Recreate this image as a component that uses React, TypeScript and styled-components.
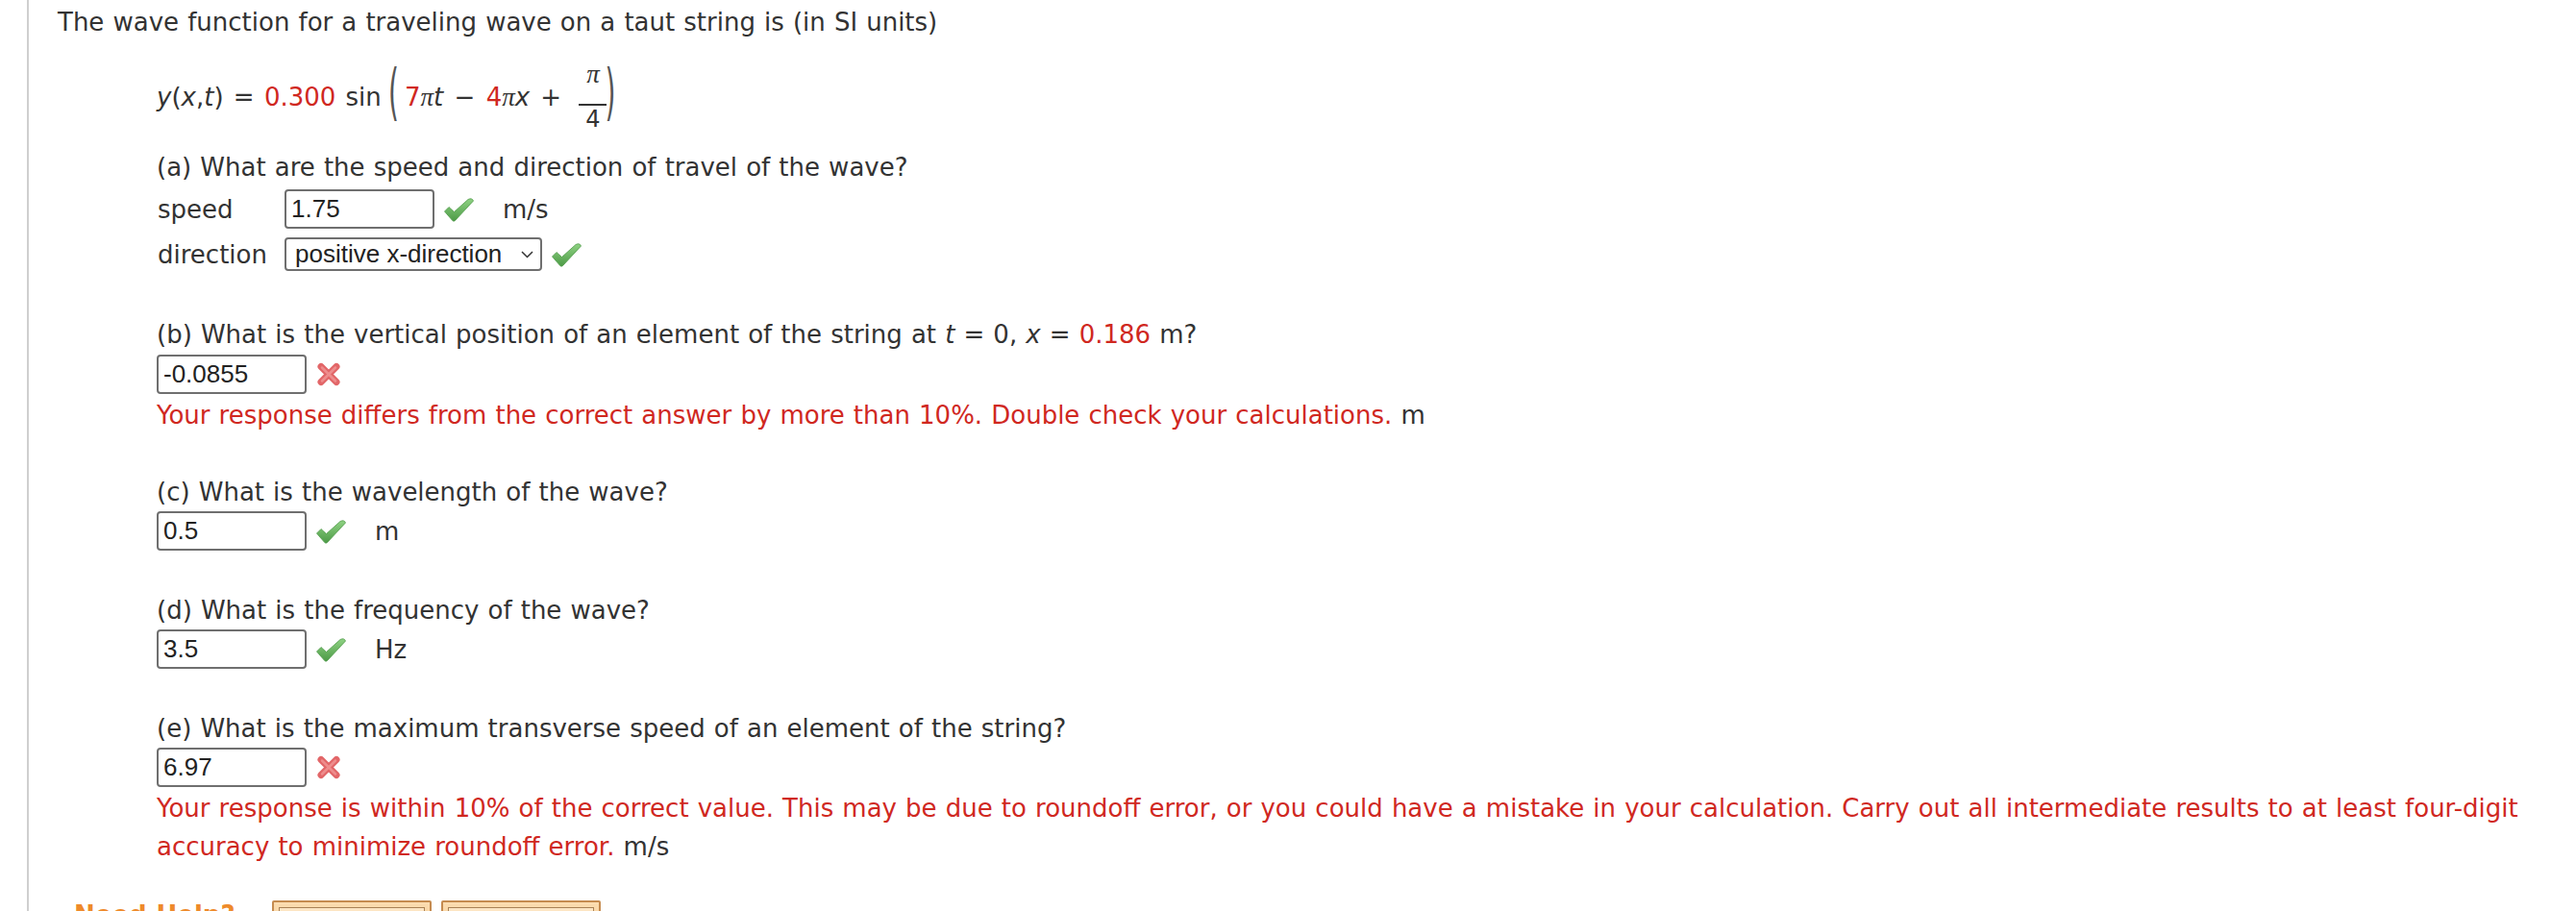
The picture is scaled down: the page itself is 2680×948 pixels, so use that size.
import React from "react";
import styled, { createGlobalStyle } from "styled-components";

const GlobalStyle = createGlobalStyle`
  html, body { margin: 0; padding: 0; background: #ffffff; }
  body {
    font-family: Verdana, "DejaVu Sans", sans-serif;
    color: #333333;
    overflow: hidden;
  }
`;

const Page = styled.div`
  margin-left: 28px;
  border-left: 2px solid #cfcfcf;
  padding: 3px 0 0 30px;
  min-height: 100vh;
  box-sizing: border-box;
  font-size: 26px;
  line-height: 40px;
  word-spacing: 0.85px;
`;

const Line = styled.div`
  line-height: 40px;
  white-space: nowrap;
`;

const Equation = styled.div`
  display: flex;
  align-items: center;
  margin: 22px 0 0 103px;
  word-spacing: 0;
`;

const MathText = styled.span<{ $ws: number }>`
  line-height: 30px;
  white-space: pre;
  word-spacing: ${(p) => p.$ws}px;
`;

const Var = styled.i`
  font-style: italic;
`;

const Pi = styled.i`
  font-family: "Liberation Serif", "DejaVu Serif", serif;
  font-style: italic;
  font-size: 27px;
`;

const Red = styled.span`
  color: #d0281f;
`;

const Paren = styled.span<{ $side: "l" | "r" }>`
  display: inline-block;
  font-size: 28px;
  line-height: 28px;
  color: #555555;
  transform: scaleY(2.3);
  margin-bottom: 8px;
  margin-left: ${(p) => (p.$side === "l" ? "-3px" : "-2px")};
  margin-right: ${(p) => (p.$side === "l" ? "6px" : "0")};
`;

const Frac = styled.span`
  display: inline-flex;
  flex-direction: column;
  align-items: center;
  font-size: 24px;
  line-height: 24px;
  margin-left: 7px;
`;

const Num = styled.span`
  padding-bottom: 18px;
`;

const Bar = styled.span`
  width: 29px;
  height: 2px;
  background: #333333;
`;

const Den = styled.span`
  padding-top: 2px;
`;

const Part = styled.div`
  margin-left: 103px;
`;

const Question = styled.div<{ $mt: number }>`
  margin-top: ${(p) => p.$mt}px;
  line-height: 40px;
  white-space: nowrap;
`;

const AnswerRow = styled.div<{ $mt: number }>`
  display: flex;
  align-items: center;
  height: 41px;
  margin-top: ${(p) => p.$mt}px;
`;

const Label = styled.span`
  width: 133px;
  flex: none;
  padding-left: 1px;
  box-sizing: border-box;
`;

const TextInput = styled.input`
  box-sizing: border-box;
  width: 156px;
  height: 41px;
  margin: 0;
  border: 2px solid #6f6f6f;
  border-radius: 4px;
  padding: 0 5px;
  font-family: Arial, "Liberation Sans", sans-serif;
  font-size: 26px;
  color: #222222;
  background: #ffffff;
  outline: none;
`;

const SelectBox = styled.div`
  box-sizing: border-box;
  width: 268px;
  height: 35px;
  border: 2px solid #6f6f6f;
  border-radius: 4px;
  padding: 0 7px 0 9px;
  display: flex;
  align-items: center;
  justify-content: space-between;
  font-family: Arial, "Liberation Sans", sans-serif;
  font-size: 26px;
  line-height: 31px;
  word-spacing: 0;
  color: #222222;
`;

const Mark = styled.span`
  margin-left: 10px;
  display: flex;
  align-items: center;
`;

const Unit = styled.span`
  margin-left: 30px;
`;

const Feedback = styled.div<{ $mt: number }>`
  margin-top: ${(p) => p.$mt}px;
  color: #d0281f;
  line-height: 40px;
  white-space: nowrap;
`;

const Tail = styled.span`
  color: #333333;
`;

const HelpRow = styled.div`
  display: flex;
  align-items: flex-start;
  margin: 36px 0 0 17px;
`;

const HelpLabel = styled.span`
  width: 206px;
  flex: none;
  font-weight: bold;
  color: #ee8a2a;
  line-height: 30px;
`;

const HelpButton = styled.button`
  box-sizing: border-box;
  width: 166px;
  height: 52px;
  margin: 0 10px 0 0;
  padding: 5px;
  border: 2px solid #c58b50;
  border-radius: 2px;
  background: linear-gradient(#fbdcb0, #f6c486);
  display: flex;
`;

const ButtonInner = styled.span`
  flex: 1;
  border: 1px solid #a98156;
  background: linear-gradient(#fde7c6, #f8cd96);
  font-family: Verdana, "DejaVu Sans", sans-serif;
  font-size: 22px;
  color: #333333;
  line-height: 36px;
`;

const CheckIcon = () => (
  <svg width="31" height="26" viewBox="0 0 31 26">
    <defs>
      <linearGradient id="chk" x1="0" y1="0" x2="0" y2="1">
        <stop offset="0" stopColor="#8fd283" />
        <stop offset="1" stopColor="#4c9a46" />
      </linearGradient>
    </defs>
    <path
      d="M0.5 15 L5 10.5 L10.5 15.5 L25 2.5 Q29 0.5 30.5 4 L11.5 24.5 Q10 25.8 8.8 24.6 Z"
      fill="url(#chk)"
      stroke="#4f9a49"
      strokeWidth="0.8"
      strokeLinejoin="round"
    />
  </svg>
);

const CrossIcon = () => (
  <svg width="26" height="25" viewBox="0 0 26 25">
    <g stroke="#e26668" strokeWidth="7" strokeLinecap="round">
      <line x1="5" y1="4.5" x2="21" y2="20.5" />
      <line x1="21" y1="4.5" x2="5" y2="20.5" />
    </g>
    <g stroke="#ee8d8d" strokeWidth="2.5" strokeLinecap="round">
      <line x1="6" y1="5.5" x2="20" y2="19.5" />
      <line x1="20" y1="5.5" x2="6" y2="19.5" />
    </g>
  </svg>
);

const Chevron = () => (
  <svg width="13" height="8" viewBox="0 0 13 8">
    <polyline points="1,1 6.5,6.5 12,1" fill="none" stroke="#333" strokeWidth="1.5" />
  </svg>
);

export default function App() {
  return (
    <>
      <GlobalStyle />
      <Page>
        <Line>The wave function for a traveling wave on a taut string is (in SI units)</Line>

        <Equation>
          <MathText $ws={2}>
            <Var>y</Var>(<Var>x</Var>,<Var>t</Var>) = <Red>0.300</Red> sin{" "}
          </MathText>
          <Paren $side="l">(</Paren>
          <MathText $ws={3}>
            <Red>7</Red>
            <Pi>π</Pi>
            <Var>t</Var> − <Red>4</Red>
            <Pi>π</Pi>
            <Var>x</Var> +{" "}
          </MathText>
          <Frac>
            <Num>
              <Pi>π</Pi>
            </Num>
            <Bar />
            <Den>4</Den>
          </Frac>
          <Paren $side="r">)</Paren>
        </Equation>

        <Part>
          <Question $mt={18}>(a) What are the speed and direction of travel of the wave?</Question>
          <AnswerRow $mt={3}>
            <Label>speed</Label>
            <TextInput readOnly value="1.75" />
            <Mark>
              <CheckIcon />
            </Mark>
            <Unit>m/s</Unit>
          </AnswerRow>
          <AnswerRow $mt={6}>
            <Label>direction</Label>
            <SelectBox>
              <span>positive x-direction</span>
              <Chevron />
            </SelectBox>
            <Mark>
              <CheckIcon />
            </Mark>
          </AnswerRow>
        </Part>

        <Part>
          <Question $mt={43}>
            (b) What is the vertical position of an element of the string at <Var>t</Var> = 0,{" "}
            <Var>x</Var> = <Red>0.186</Red> m?
          </Question>
          <AnswerRow $mt={1}>
            <TextInput readOnly value="-0.0855" />
            <Mark>
              <CrossIcon />
            </Mark>
          </AnswerRow>
          <Feedback $mt={2}>
            Your response differs from the correct answer by more than 10%. Double check your calculations.{" "}
            <Tail>m</Tail>
          </Feedback>
        </Part>

        <Part>
          <Question $mt={40}>(c) What is the wavelength of the wave?</Question>
          <AnswerRow $mt={0}>
            <TextInput readOnly value="0.5" />
            <Mark>
              <CheckIcon />
            </Mark>
            <Unit>m</Unit>
          </AnswerRow>
        </Part>

        <Part>
          <Question $mt={42}>(d) What is the frequency of the wave?</Question>
          <AnswerRow $mt={0}>
            <TextInput readOnly value="3.5" />
            <Mark>
              <CheckIcon />
            </Mark>
            <Unit>Hz</Unit>
          </AnswerRow>
        </Part>

        <Part>
          <Question $mt={42}>(e) What is the maximum transverse speed of an element of the string?</Question>
          <AnswerRow $mt={0}>
            <TextInput readOnly value="6.97" />
            <Mark>
              <CrossIcon />
            </Mark>
          </AnswerRow>
          <Feedback $mt={2}>
            Your response is within 10% of the correct value. This may be due to roundoff error, or you could have a
            mistake in your calculation. Carry out all intermediate results to at least four-digit
            <br />
            accuracy to minimize roundoff error. <Tail>m/s</Tail>
          </Feedback>
        </Part>

        <HelpRow>
          <HelpLabel>Need Help?</HelpLabel>
          <HelpButton>
            <ButtonInner>Read It</ButtonInner>
          </HelpButton>
          <HelpButton>
            <ButtonInner>Watch It</ButtonInner>
          </HelpButton>
        </HelpRow>
      </Page>
    </>
  );
}
